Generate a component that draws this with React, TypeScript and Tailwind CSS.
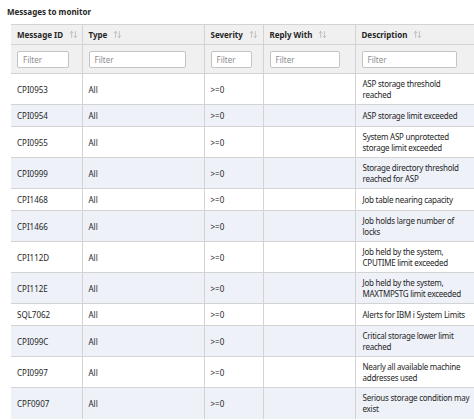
import { ArrowUpDown } from "lucide-react";

type Row = { id: string; desc: string[] };

const rows: Row[] = [
  { id: "CPI0953", desc: ["ASP storage threshold", "reached"] },
  { id: "CPI0954", desc: ["ASP storage limit exceeded"] },
  { id: "CPI0955", desc: ["System ASP unprotected", "storage limit exceeded"] },
  { id: "CPI0999", desc: ["Storage directory threshold", "reached for ASP"] },
  { id: "CPI1468", desc: ["Job table nearing capacity"] },
  { id: "CPI1466", desc: ["Job holds large number of", "locks"] },
  { id: "CPI112D", desc: ["Job held by the system,", "CPUTIME limit exceeded"] },
  { id: "CPI112E", desc: ["Job held by the system,", "MAXTMPSTG limit exceeded"] },
  { id: "SQL7062", desc: ["Alerts for IBM i System Limits"] },
  { id: "CPI099C", desc: ["Critical storage lower limit", "reached"] },
  { id: "CPI0997", desc: ["Nearly all available machine", "addresses used"] },
  { id: "CPF0907", desc: ["Serious storage condition may", "exist"] },
];

const cols = [
  { label: "Message ID", w: "w-[71px]", input: "w-[52px]" },
  { label: "Type", w: "w-[122px]", input: "w-[97px]" },
  { label: "Severity", w: "w-[59px]", input: "w-[41px]" },
  { label: "Reply With", w: "w-[92px]", input: "w-[70px]" },
  { label: "Description", w: "w-[124px]", input: "w-[95px]" },
];

export default function App() {
  return (
    <div
      className="w-[474px] h-[420px] overflow-hidden bg-white text-[#262626]"
      style={{ fontFamily: '"Noto Sans", "Open Sans", sans-serif' }}
    >
      <div className="pl-[7px] pt-[6px] h-[24px] text-[8px] font-bold leading-[11px]">
        Messages to monitor
      </div>
      <table className="ml-[11px] w-[468px] min-w-[468px] border-collapse table-fixed text-[8px] leading-[11px]">
        <thead>
          <tr className="h-[20px] bg-[#f0f0f0]">
            {cols.map((c, i) => (
              <th
                key={c.label}
                className={`${c.w} p-0 pl-[6px] text-left font-bold border-t border-[#d3d3d3] ${
                  i > 0 ? "border-l" : ""
                }`}
              >
                <span className="flex items-center gap-[6px] whitespace-nowrap">
                  {c.label}
                  <ArrowUpDown size={9} strokeWidth={1.5} className="text-[#a0a0a0]" />
                </span>
              </th>
            ))}
          </tr>
          <tr className="h-[29px] bg-[#f0f0f0] border-t border-[#d3d3d3]">
            {cols.map((c, i) => (
              <th key={c.label} className={`p-0 pl-[6px] text-left ${i > 0 ? "border-l border-[#d3d3d3]" : ""}`}>
                <div
                  className={`${c.input} h-[17px] bg-white border border-[#c4c4c4] rounded-[2px] pl-[5px] flex items-center text-[8px] font-normal text-[#8d8d8d]`}
                >
                  Filter
                </div>
              </th>
            ))}
          </tr>
        </thead>
        <tbody>
          {rows.map((r, idx) => (
            <tr
              key={r.id}
              className={`${r.desc.length > 1 ? "h-[31px]" : "h-[22px]"} border-t border-[#d3d3d3] ${
                idx % 2 === 1 ? "bg-[#eef1f8]" : "bg-white"
              }`}
            >
              <td className="p-0 pl-[6px] whitespace-nowrap">{r.id}</td>
              <td className="p-0 pl-[6px] border-l border-[#d3d3d3]">All</td>
              <td className="p-0 pl-[6px] border-l border-[#d3d3d3]">&gt;=0</td>
              <td className="p-0 pl-[6px] border-l border-[#d3d3d3]"></td>
              <td className="p-0 pl-[7px] border-l border-[#d3d3d3] whitespace-nowrap tracking-[-0.25px]">
                {r.desc.map((line, j) => (
                  <div key={j}>{line}</div>
                ))}
              </td>
            </tr>
          ))}
        </tbody>
      </table>
    </div>
  );
}
